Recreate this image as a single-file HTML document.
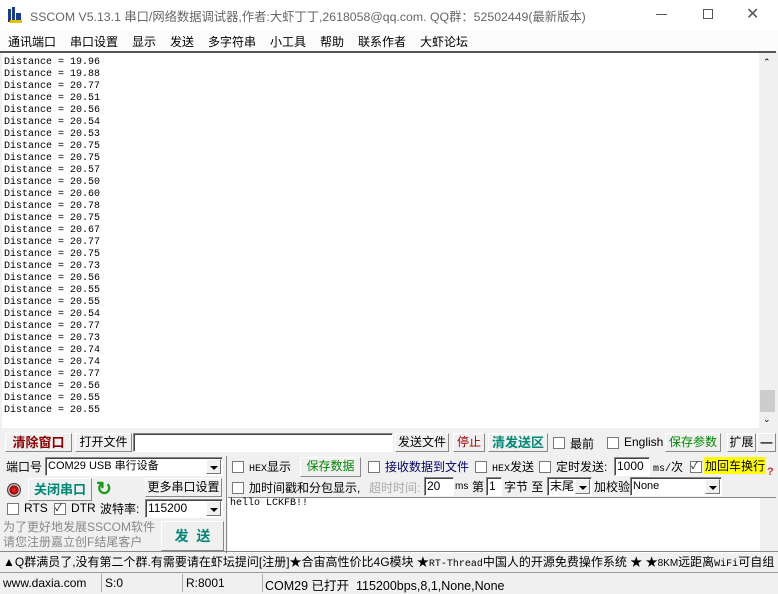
<!DOCTYPE html>
<html><head><meta charset="utf-8"><style>
*{margin:0;padding:0;box-sizing:border-box}
body{width:778px;height:593px;overflow:hidden;background:#f0f0f0;font-family:"Liberation Sans","Noto Sans CJK SC",sans-serif;font-size:12px;color:#000;position:relative}
.a{position:absolute;white-space:nowrap}
.btn{position:absolute;border:1px solid;border-color:#fff #888 #888 #fff;background:#f0f0f0;text-align:center;line-height:17px;font-size:12px}
.in{position:absolute;background:#fff;border:1px solid;border-color:#888 #fff #fff #888;box-shadow:inset 1px 1px 0 #444;line-height:16px;padding-left:2px}
.cb{position:absolute;width:12px;height:12px;background:#fff;border:1px solid #777}
.dd{position:absolute;right:1px;top:1px;width:15px;bottom:1px;background:#f0f0f0;border:1px solid;border-color:#fff #777 #777 #fff}
.dd:after{content:"";position:absolute;left:3px;top:6px;border:4px solid transparent;border-top:4px solid #000;border-bottom:0}
pre{font-family:"Liberation Mono",monospace;font-size:10px;line-height:12px;white-space:pre!important}
.m{position:absolute;top:33px;font-size:12px}
</style></head><body>
<div class="a" style="left:0;top:0;width:778px;height:30px;background:#fff"></div>
<div class="a" style="left:8px;top:7px;width:14px;height:16px"><div style="position:absolute;left:0;top:2px;width:3px;height:13px;background:#1a3a8a"></div><div style="position:absolute;left:4px;top:0;width:3px;height:15px;background:#1a3a8a"></div><div style="position:absolute;left:8px;top:6px;width:5px;height:9px;background:#1a3a8a"></div><div style="position:absolute;left:2px;top:13px;width:12px;height:3px;background:#e8c000"></div></div>
<div class="a" style="left:30px;top:7px;font-size:12.3px;color:#666">SSCOM V5.13.1 串口/网络数据调试器,作者:大虾丁丁,2618058@qq.com. QQ群：52502449(最新版本)</div>
<div class="a" style="left:656px;top:14px;width:11px;height:1px;background:#555"></div>
<div class="a" style="left:703px;top:9px;width:10px;height:10px;border:1px solid #555"></div>
<div class="a" style="left:746px;top:4px;font-size:16px;color:#555">✕</div>
<div class="a" style="left:0;top:30px;width:778px;height:22px;background:#fbfbfb"></div>
<div class="m" style="left:8px">通讯端口</div><div class="m" style="left:70px">串口设置</div><div class="m" style="left:132px">显示</div><div class="m" style="left:170px">发送</div><div class="m" style="left:208px">多字符串</div><div class="m" style="left:270px">小工具</div><div class="m" style="left:320px">帮助</div><div class="m" style="left:358px">联系作者</div><div class="m" style="left:420px">大虾论坛</div>
<div class="a" style="left:0;top:51px;width:776px;height:2px;background:#555"></div>
<div class="a" style="left:2px;top:53px;width:774px;height:375px;background:#fff"></div>
<div class="a" style="left:759px;top:53px;width:17px;height:375px;background:#f0f0f0"></div>
<div class="a" style="left:763px;top:57px;font-size:9px">⌃</div>
<div class="a" style="left:760px;top:390px;width:15px;height:22px;background:#cdcdcd"></div>
<div class="a" style="left:763px;top:414px;font-size:9px">⌄</div>
<pre class="a" style="left:4px;top:57px">Distance = 19.96
Distance = 19.88
Distance = 20.77
Distance = 20.51
Distance = 20.56
Distance = 20.54
Distance = 20.53
Distance = 20.75
Distance = 20.75
Distance = 20.57
Distance = 20.50
Distance = 20.60
Distance = 20.78
Distance = 20.75
Distance = 20.67
Distance = 20.77
Distance = 20.75
Distance = 20.73
Distance = 20.56
Distance = 20.55
Distance = 20.55
Distance = 20.54
Distance = 20.77
Distance = 20.73
Distance = 20.74
Distance = 20.74
Distance = 20.77
Distance = 20.56
Distance = 20.55
Distance = 20.55</pre>
<!-- row1 -->
<div class="btn" style="left:5px;top:433px;width:67px;height:19px;color:#8b0000;font-weight:bold;font-size:13px">清除窗口</div>
<div class="btn" style="left:75px;top:433px;width:57px;height:19px">打开文件</div>
<div class="in" style="left:133px;top:433px;width:260px;height:19px"></div>
<div class="btn" style="left:395px;top:433px;width:54px;height:19px">发送文件</div>
<div class="btn" style="left:453px;top:433px;width:32px;height:19px;color:#a00">停止</div>
<div class="btn" style="left:488px;top:433px;width:60px;height:19px;color:#087;font-weight:bold;font-size:13px">清发送区</div>
<div class="cb" style="left:553px;top:437px"></div><div class="a" style="left:570px;top:435px">最前</div>
<div class="cb" style="left:607px;top:437px"></div><div class="a" style="left:624px;top:435px">English</div>
<div class="btn" style="left:665px;top:433px;width:56px;height:19px;color:#080">保存参数</div>
<div class="btn" style="left:727px;top:433px;width:29px;height:19px">扩展</div>
<div class="btn" style="left:757px;top:433px;width:19px;height:19px;font-weight:bold">—</div>
<!-- left panel -->
<div class="a" style="left:6px;top:458px">端口号</div>
<div class="in" style="left:45px;top:457px;width:178px;height:19px;font-size:11px">COM29 USB 串行设备<div class="dd"></div></div>
<div class="a" style="left:7px;top:483px;width:14px;height:14px;border-radius:50%;background:radial-gradient(circle,#e33 0,#900 45%,#fff 50%,#333 65%,#ccc 90%)"></div>
<div class="btn" style="left:28px;top:478px;width:64px;height:23px;line-height:21px;color:#087;font-weight:bold;font-size:13px">关闭串口</div>
<div class="a" style="left:96px;top:478px;color:#1a9a1a;font-size:19px;font-weight:bold">↻</div>
<div class="btn" style="left:145px;top:478px;width:77px;height:19px">更多串口设置</div>
<div class="cb" style="left:7px;top:503px"></div><div class="a" style="left:24px;top:501px">RTS</div>
<div class="cb" style="left:54px;top:503px;font-size:10px;line-height:10px">✓</div><div class="a" style="left:71px;top:501px">DTR</div>
<div class="a" style="left:100px;top:500px">波特率:</div>
<div class="in" style="left:145px;top:499px;width:78px;height:19px">115200<div class="dd"></div></div>
<div class="a" style="left:3px;top:520px;color:#888;line-height:15px">为了更好地发展SSCOM软件<br>请您注册嘉立创F结尾客户</div>
<div class="btn" style="left:161px;top:521px;width:63px;height:30px;line-height:28px;color:#087;font-weight:bold;font-size:14px">发&nbsp;&nbsp;送</div>
<!-- right panel -->
<div class="a" style="left:226px;top:456px;width:1px;height:97px;background:#888"></div>
<div class="cb" style="left:232px;top:461px"></div><div class="a" style="left:249px;top:458px"><span style="font-size:10px;font-family:'Liberation Mono'">HEX</span>显示</div>
<div class="btn" style="left:300px;top:457px;width:61px;height:20px;color:#080">保存数据</div>
<div class="cb" style="left:368px;top:461px"></div><div class="a" style="left:385px;top:458px;color:#006">接收数据到文件</div>
<div class="cb" style="left:475px;top:461px"></div><div class="a" style="left:492px;top:458px"><span style="font-size:10px;font-family:'Liberation Mono'">HEX</span>发送</div>
<div class="cb" style="left:539px;top:461px"></div><div class="a" style="left:556px;top:458px">定时发送:</div>
<div class="in" style="left:614px;top:457px;width:36px;height:19px">1000</div>
<div class="a" style="left:653px;top:458px"><span style="font-size:10px;font-family:'Liberation Mono'">ms/</span>次</div>
<div class="cb" style="left:690px;top:461px;font-size:10px;line-height:10px">✓</div>
<div class="a" style="left:704px;top:457px;background:#ff0;padding:0 1px">加回车换行</div>
<div class="a" style="left:767px;top:466px;color:#c33;font-weight:bold;font-size:11px">?</div>
<div class="cb" style="left:232px;top:482px"></div><div class="a" style="left:249px;top:479px">加时间戳和分包显示,</div>
<div class="a" style="left:369px;top:479px;color:#aaa">超时时间:</div>
<div class="in" style="left:424px;top:477px;width:30px;height:19px">20</div>
<div class="a" style="left:455px;top:481px;font-size:10px">ms</div>
<div class="a" style="left:472px;top:478px">第</div>
<div class="in" style="left:486px;top:477px;width:16px;height:19px">1</div>
<div class="a" style="left:504px;top:478px">字节 至</div>
<div class="in" style="left:547px;top:477px;width:45px;height:19px">末尾<div class="dd"></div></div>
<div class="a" style="left:594px;top:478px">加校验</div>
<div class="in" style="left:630px;top:477px;width:92px;height:19px;font-size:11px">None<div class="dd"></div></div>
<div class="a" style="left:228px;top:497px;width:548px;height:56px;background:#fff;border-top:1px solid #888"></div>
<div class="a" style="left:760px;top:498px;width:16px;height:55px;background:#f0f0f0"></div>
<div class="a" style="left:230px;top:498px;font-family:'Liberation Mono';font-size:10px">hello LCKFB!!</div>
<!-- ticker -->
<div class="a" style="left:0;top:551px;width:778px;height:1px;background:#888"></div>
<div class="a" style="left:3px;top:553px;font-size:12px">▲Q群满员了,没有第二个群.有需要请在虾坛提问[注册]★合宙高性价比4G模块 ★<span style="font-family:'Liberation Mono';font-size:10px">RT-Thread</span>中国人的开源免费操作系统 ★ ★<span style="font-size:10px">8KM</span>远距离<span style="font-family:'Liberation Mono';font-size:10px">WiFi</span>可自组</div>
<div class="a" style="left:0;top:572px;width:778px;height:1px;background:#999"></div>
<div class="a" style="left:3px;top:576px;font-size:12px">www.daxia.com</div>
<div class="a" style="left:101px;top:574px;width:1px;height:18px;background:#aaa"></div>
<div class="a" style="left:105px;top:576px">S:0</div>
<div class="a" style="left:182px;top:574px;width:1px;height:18px;background:#aaa"></div>
<div class="a" style="left:186px;top:576px">R:8001</div>
<div class="a" style="left:262px;top:574px;width:1px;height:18px;background:#aaa"></div>
<div class="a" style="left:265px;top:575px;font-size:12.5px">COM29 已打开&nbsp; 115200bps,8,1,None,None</div>
</body></html>
